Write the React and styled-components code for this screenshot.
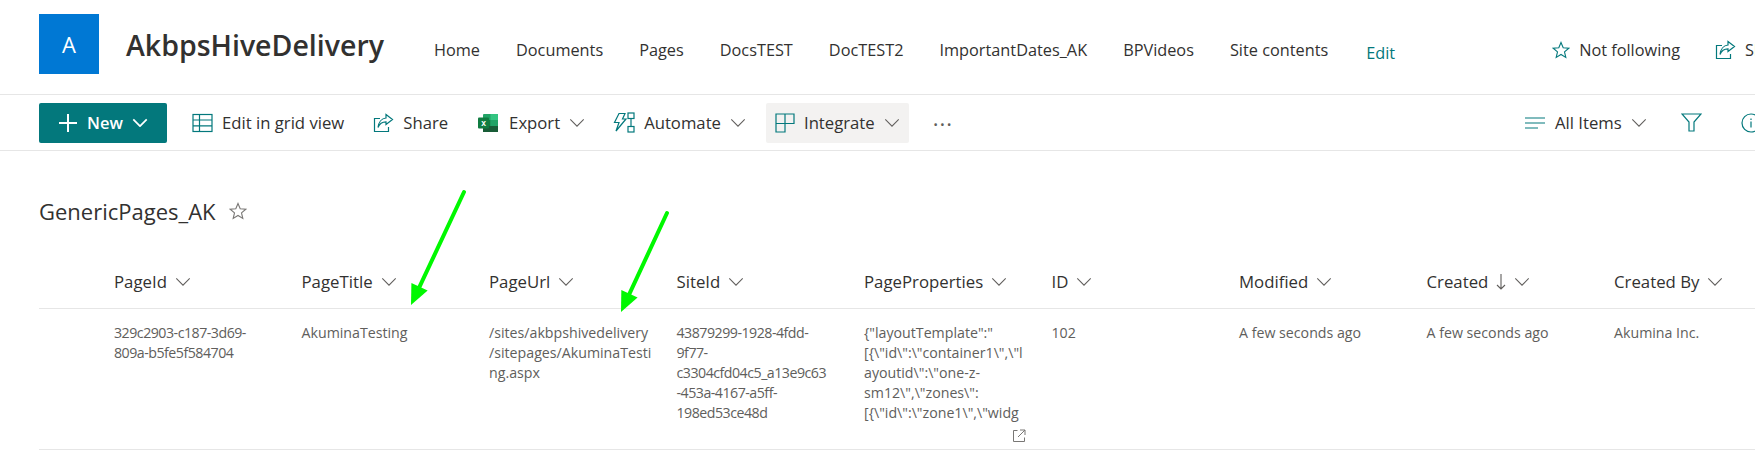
import React from 'react';
import styled, { createGlobalStyle } from 'styled-components';

const TEAL = '#03787c';

const Global = createGlobalStyle`
  html, body { margin: 0; padding: 0; background: #fff; }
  body { font-family: "Open Sans", "Noto Sans", sans-serif; color: #323130; }
`;

const navItems = ['Home', 'Documents', 'Pages', 'DocsTEST', 'DocTEST2', 'ImportantDates_AK', 'BPVideos', 'Site contents'];

const columns = [
  { title: 'PageId', numeric: true, lines: ['329c2903-c187-3d69-', '809a-b5fe5f584704'] },
  { title: 'PageTitle', lines: ['AkuminaTesting'] },
  { title: 'PageUrl', lines: ['/sites/akbpshivedelivery', '/sitepages/AkuminaTesti', 'ng.aspx'] },
  { title: 'SiteId', numeric: true, lines: ['43879299-1928-4fdd-', '9f77-', 'c3304cfd04c5_a13e9c63', '-453a-4167-a5ff-', '198ed53ce48d'] },
  {
    title: 'PageProperties',
    lines: ['{"layoutTemplate":"', '[{\\"id\\":\\"container1\\",\\"l', 'ayoutid\\":\\"one-z-', 'sm12\\",\\"zones\\":', '[{\\"id\\":\\"zone1\\",\\"widg'],
    more: true,
  },
  { title: 'ID', lines: ['102'] },
  { title: 'Modified', lines: ['A few seconds ago'] },
  { title: 'Created', sorted: true, lines: ['A few seconds ago'] },
  { title: 'Created By', lines: ['Akumina Inc.'] },
];

const Chevron = ({ color = '#605e5c', size = 16, weight = 1.1 }) => (
  <svg width={size} height={size * 0.6} viewBox="0 0 16 10" fill="none" stroke={color} strokeWidth={weight}>
    <path d="M1 1.500 8 8.500 15 1.500" />
  </svg>
);

const PlusIcon = () => (
  <svg width="20" height="20" viewBox="0 0 20 20" fill="none" stroke="#fff" strokeWidth="2">
    <path d="M10 1v18M1 10h18" />
  </svg>
);

const GridIcon = () => (
  <svg width="21" height="20" viewBox="0 0 21 20" fill="none" stroke={TEAL} strokeWidth="1.2">
    <rect x="1" y="1.500" width="19" height="17" />
    <path d="M1 7h19M1 12.800h19M7.500 1.500v17" />
  </svg>
);

const ShareIcon = ({ color = TEAL }) => (
  <svg width="21" height="20" viewBox="0 0 21 20" fill="none" stroke={color} strokeWidth="1.2">
    <path d="M7 5.500H1.500v13h14V14" />
    <path d="M13 1.500 19.500 6.500 13 11.500V8.800C9.500 8.800 6.500 10.500 5 14.500 5.500 9.500 8.500 5.500 13 5z" />
  </svg>
);

const ExcelIcon = () => (
  <svg width="20" height="20" viewBox="0 0 20 20">
    <rect x="5" y="1" width="15" height="18" rx="1" fill="#21a366" />
    <rect x="12.500" y="1" width="7.500" height="6" fill="#33c481" />
    <rect x="5" y="7" width="7.500" height="6" fill="#107c41" />
    <rect x="12.500" y="7" width="7.500" height="6" fill="#21a366" />
    <rect x="5" y="13" width="15" height="6" fill="#185c37" />
    <rect x="0" y="4.500" width="11" height="11" rx="1" fill="#107c41" />
    <text x="5.500" y="13" fontSize="8.500" fontWeight="700" fill="#fff" textAnchor="middle" fontFamily="Liberation Sans, sans-serif">x</text>
  </svg>
);

const AutomateIcon = () => (
  <svg width="22" height="21" viewBox="0 0 22 21" fill="none" stroke={TEAL} strokeWidth="1.2">
    <path d="M6 1.500h6L9.500 7H13L3 19l3-8.500H1.500z" />
    <rect x="15" y="1" width="6" height="5.500" />
    <rect x="15" y="14.500" width="6" height="5.500" />
    <path d="M18 6.500v8" />
  </svg>
);

const IntegrateIcon = () => (
  <svg width="20" height="20" viewBox="0 0 20 20" fill="none" stroke={TEAL} strokeWidth="1.2">
    <path d="M1 1h18v9.500H10V19H1zM1 10.500h9M10 1v9.500" />
  </svg>
);

const StarIcon = ({ color = TEAL, size = 18 }) => (
  <svg width={size} height={size} viewBox="0 0 18 18" fill="none" stroke={color} strokeWidth="1.1">
    <path d="M9 1.500 11.200 6.700 16.800 7.200 12.500 10.900 13.800 16.400 9 13.500 4.200 16.400 5.500 10.900 1.200 7.200 6.800 6.700z" />
  </svg>
);

const ViewIcon = () => (
  <svg width="21" height="12" viewBox="0 0 21 12" fill="none" stroke={TEAL} strokeWidth="1.2">
    <path d="M0 1h20M0 6h20M0 11h13" />
  </svg>
);

const FilterIcon = () => (
  <svg width="21" height="19" viewBox="0 0 21 19" fill="none" stroke={TEAL} strokeWidth="1.2">
    <path d="M1 1h19l-7 8v9H8V9z" />
  </svg>
);

const InfoIcon = () => (
  <svg width="20" height="20" viewBox="0 0 20 20" fill="none" stroke={TEAL} strokeWidth="1.2">
    <circle cx="10" cy="10" r="9" />
    <path d="M10 8.500v6M10 5.500v1.500" />
  </svg>
);

const SortArrow = () => (
  <svg width="10" height="16" viewBox="0 0 10 16" fill="none" stroke="#605e5c" strokeWidth="1.1">
    <path d="M5 0v15M1 11l4 4 4-4" />
  </svg>
);

const OpenIcon = () => (
  <svg width="14" height="14" viewBox="0 0 14 14" fill="none" stroke="#797775" strokeWidth="1">
    <path d="M5.500 1.500h-4v11h11v-4M8 1h5v5M13 1 6 8" />
  </svg>
);

const Arrow = ({ x1, y1, x2, y2 }) => {
  const angle = Math.atan2(y2 - y1, x2 - x1);
  const head = 22;
  const spread = 0.42;
  const ax = x2 - head * Math.cos(angle - spread);
  const ay = y2 - head * Math.sin(angle - spread);
  const bx = x2 - head * Math.cos(angle + spread);
  const by = y2 - head * Math.sin(angle + spread);
  const mx = x2 - 15 * Math.cos(angle);
  const my = y2 - 15 * Math.sin(angle);
  return (
    <>
      <line x1={x1} y1={y1} x2={mx} y2={my} stroke="#00f800" strokeWidth="4" strokeLinecap="round" />
      <polygon points={`${x2},${y2} ${ax},${ay} ${bx},${by}`} fill="#00f800" />
    </>
  );
};

export default function App() {
  return (
    <Page>
      <Global />
      <SiteHeader>
        <SiteTile>A</SiteTile>
        <SiteName>AkbpsHiveDelivery</SiteName>
        <Nav>
          {navItems.map((item) => (
            <NavLink key={item}>{item}</NavLink>
          ))}
          <EditLink>Edit</EditLink>
        </Nav>
        <SiteActions>
          <ActionItem>
            <StarIcon />
            Not following
          </ActionItem>
          <ActionItem>
            <ShareIcon />
            Share
          </ActionItem>
        </SiteActions>
      </SiteHeader>

      <Toolbar>
        <NewButton>
          <PlusIcon />
          New
          <Chevron color="#fff" weight={1.8} />
        </NewButton>
        <ToolItem $gap={25}>
          <GridIcon />
          Edit in grid view
        </ToolItem>
        <ToolItem $gap={29}>
          <ShareIcon />
          Share
        </ToolItem>
        <ToolItem $gap={30} $labelGap={11}>
          <ExcelIcon />
          Export
          <Chevron />
        </ToolItem>
        <ToolItem $gap={28}>
          <AutomateIcon />
          Automate
          <Chevron />
        </ToolItem>
        <ToolItem $gap={20} $active>
          <IntegrateIcon />
          Integrate
          <Chevron />
        </ToolItem>
        <MoreDots>···</MoreDots>
        <ToolbarRight>
          <ToolItem $gap={0}>
            <ViewIcon />
            All Items
            <Chevron />
          </ToolItem>
          <IconSlot $gap={34}>
            <FilterIcon />
          </IconSlot>
          <IconSlot $gap={39}>
            <InfoIcon />
          </IconSlot>
        </ToolbarRight>
      </Toolbar>

      <ListTitle>
        GenericPages_AK
        <StarIcon color="#797775" />
      </ListTitle>

      <Table>
        <HeaderRow>
          {columns.map((col) => (
            <HeaderCell key={col.title}>
              {col.title}
              {col.sorted && <SortArrow />}
              <Chevron />
            </HeaderCell>
          ))}
        </HeaderRow>
        <DataRow>
          {columns.map((col) => (
            <DataCell key={col.title} $numeric={col.numeric}>
              {col.lines.map((line) => (
                <CellLine key={line}>{line}</CellLine>
              ))}
              {col.more && (
                <MoreLink>
                  <OpenIcon />
                </MoreLink>
              )}
            </DataCell>
          ))}
        </DataRow>
      </Table>

      <Annotations width="1755" height="453" viewBox="0 0 1755 453">
        <Arrow x1={464} y1={192} x2={411} y2={305} />
        <Arrow x1={667} y1={213} x2={621} y2={312} />
      </Annotations>
    </Page>
  );
}

const Page = styled.div`
  position: relative;
  width: 1755px;
  height: 453px;
  overflow: hidden;
  background: #fff;
`;

const SiteHeader = styled.header`
  display: flex;
  align-items: flex-start;
  height: 94px;
  padding-left: 39px;
  border-bottom: 1px solid #e6e6e6;
  white-space: nowrap;
`;

const SiteTile = styled.div`
  flex: none;
  width: 60px;
  height: 60px;
  margin-top: 14px;
  display: flex;
  align-items: center;
  justify-content: center;
  background: #0078d4;
  color: #fff;
  font-size: 22px;
`;

const SiteName = styled.div`
  flex: none;
  width: 308px;
  margin: 24px 0 0 27px;
  font-size: 28.5px;
  line-height: 42px;
  font-weight: 600;
  color: #323130;
`;

const Nav = styled.nav`
  flex: none;
  display: flex;
  align-items: flex-start;
  gap: 36px;
  margin-top: 38px;
`;

const NavLink = styled.a`
  font-size: 16.3px;
  line-height: 24px;
  color: #323130;
`;

const EditLink = styled(NavLink)`
  color: ${TEAL};
  margin: 3px 0 0 2px;
`;

const SiteActions = styled.div`
  display: flex;
  gap: 35px;
  margin: 38px 0 0 157px;
`;

const ActionItem = styled.div`
  flex: none;
  display: flex;
  align-items: center;
  gap: 9px;
  height: 24px;
  font-size: 16.3px;
`;

const Toolbar = styled.div`
  display: flex;
  align-items: center;
  height: 55px;
  padding-left: 39px;
  border-bottom: 1px solid #e6e6e6;
  white-space: nowrap;
`;

const NewButton = styled.button`
  flex: none;
  display: flex;
  align-items: center;
  justify-content: center;
  gap: 9px;
  width: 128px;
  height: 40px;
  padding: 0;
  border: 0;
  border-radius: 2px;
  background: #03787c;
  color: #fff;
  font: 600 16.5px "Open Sans", sans-serif;
`;

const ToolItem = styled.div`
  flex: none;
  display: flex;
  align-items: center;
  gap: 9px;
  height: 40px;
  margin-left: ${(p) => p.$gap}px;
  padding: 0 ${(p) => (p.$active ? '9px' : '0')};
  border-radius: 2px;
  background: ${(p) => (p.$active ? '#f3f2f1' : 'transparent')};
  font-size: 16.7px;

  & > svg:first-child {
    margin-right: ${(p) => (p.$labelGap ? p.$labelGap - 9 : 0)}px;
  }
`;

const MoreDots = styled.div`
  margin-left: 24px;
  font-size: 22px;
  line-height: 22px;
  color: #605e5c;
  letter-spacing: 1px;
`;

const ToolbarRight = styled.div`
  display: flex;
  align-items: center;
  margin-left: 572px;
`;

const IconSlot = styled.div`
  flex: none;
  display: flex;
  margin-left: ${(p) => p.$gap}px;
`;

const ListTitle = styled.h2`
  display: flex;
  align-items: center;
  gap: 13px;
  margin: 46px 0 34px 39px;
  font-size: 22px;
  line-height: 28px;
  font-weight: 500;
  color: #323130;
`;

const Table = styled.div`
  margin-left: 39px;
`;

const Row = styled.div`
  display: grid;
  grid-template-columns: repeat(9, 187.5px);
  padding-left: 75px;
  border-bottom: 1px solid #e6e6e6;
`;

const HeaderRow = styled(Row)`
  height: 45px;
  padding-bottom: 4px;
  align-items: center;
`;

const HeaderCell = styled.div`
  display: flex;
  align-items: center;
  gap: 8px;
  font-size: 16.8px;
  font-weight: 500;
  white-space: nowrap;
  color: #323130;
`;

const DataRow = styled(Row)`
  height: 126px;
  padding-top: 14px;
`;

const DataCell = styled.div`
  position: relative;
  font-size: 14.2px;
  line-height: 20px;
  letter-spacing: ${(p) => (p.$numeric ? '-0.5px' : '0')};
  color: #605e5c;
`;

const CellLine = styled.div`
  white-space: nowrap;
`;

const MoreLink = styled.span`
  position: absolute;
  left: 148px;
  top: 105px;
`;

const Annotations = styled.svg`
  position: absolute;
  inset: 0;
  pointer-events: none;
`;
